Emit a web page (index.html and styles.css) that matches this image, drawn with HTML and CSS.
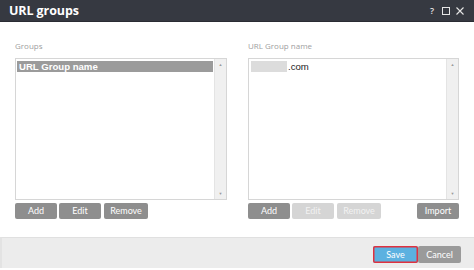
FILE: index.html
```html
<!DOCTYPE html>
<html>
<head>
<meta charset="utf-8">
<link rel="stylesheet" href="styles.css">
</head>
<body>
<div class="dialog">
  <div class="titlebar">
    <span class="title">URL groups</span>
    <div class="win-icons">
      <span class="ic-help">?</span>
      <svg class="ic" width="8" height="8" viewBox="0 0 8 8"><rect x="0.5" y="0.5" width="7" height="7" fill="none" stroke="#e6e6e6" stroke-width="1"/></svg>
      <svg class="ic" width="8" height="8" viewBox="0 0 8 8"><path d="M0.5 0.5L7.5 7.5M7.5 0.5L0.5 7.5" stroke="#e6e6e6" stroke-width="1.1"/></svg>
    </div>
  </div>
  <div class="content">
    <div class="col">
      <div class="label">Groups</div>
      <div class="listbox">
        <div class="items">
          <div class="item selected">URL Group name</div>
        </div>
        <div class="scrollbar"><span class="arr">&#9650;</span><span class="arr">&#9660;</span></div>
      </div>
      <div class="btnrow">
        <button class="btn">Add</button>
        <button class="btn">Edit</button>
        <button class="btn">Remove</button>
      </div>
    </div>
    <div class="col">
      <div class="label">URL Group name</div>
      <div class="listbox">
        <div class="items">
          <div class="item"><span class="blur"></span>.com</div>
        </div>
        <div class="scrollbar"><span class="arr">&#9650;</span><span class="arr">&#9660;</span></div>
      </div>
      <div class="btnrow">
        <button class="btn">Add</button>
        <button class="btn disabled">Edit</button>
        <button class="btn disabled">Remove</button>
        <span class="spacer"></span>
        <button class="btn">Import</button>
      </div>
    </div>
  </div>
  <div class="footer">
    <button class="btn save">Save</button>
    <button class="btn cancel">Cancel</button>
  </div>
</div>
</body>
</html>
```
FILE: styles.css
```css
html, body {
  margin: 0;
  padding: 0;
  background: #fff;
}
.dialog {
  width: 474px;
  height: 270px;
  display: flex;
  flex-direction: column;
  font-family: "Open Sans", "Liberation Sans", sans-serif;
}
.titlebar {
  height: 22px;
  background: #363941;
  border-bottom: 1px solid #2a2c33;
  box-sizing: border-box;
  display: flex;
  align-items: center;
  justify-content: space-between;
  padding: 0 10px 0 9px;
}
.title {
  color: #fff;
  font-weight: 700;
  font-size: 12.5px;
  letter-spacing: -0.1px;
}
.win-icons {
  display: flex;
  align-items: center;
  gap: 6px;
}
.ic-help {
  color: #e6e6e6;
  font-size: 9px;
  font-weight: 600;
  margin-right: 2px;
}
.content {
  flex: 1;
  display: grid;
  grid-template-columns: 212px 211px;
  column-gap: 21px;
  padding: 18px 0 0 15px;
}
.col {
  display: flex;
  flex-direction: column;
}
.label {
  height: 12px;
  line-height: 12px;
  font-size: 8px;
  color: #a0a0a0;
  margin-bottom: 6px;
}
.listbox {
  height: 142px;
  box-sizing: border-box;
  border: 1px solid #d6d6d6;
  display: flex;
}
.items {
  flex: 1;
  padding: 2px 1px 0 1px;
}
.item {
  height: 11px;
  line-height: 11px;
  font-family: "Liberation Sans", Arial, sans-serif;
  font-size: 9.6px;
  color: #222;
  display: flex;
  align-items: center;
}
.item.selected {
  background: #9b9b9b;
  color: #fff;
  font-weight: 700;
  padding-left: 2px;
}
.blur {
  display: inline-block;
  width: 36px;
  height: 11px;
  background: #dcdcdc;
  margin: 0 1px 0 1px;
}
.scrollbar {
  width: 11px;
  background: #f0f0f0;
  border-left: 1px solid #e4e4e4;
  display: flex;
  flex-direction: column;
  justify-content: space-between;
  align-items: center;
  padding: 3px 0 3px;
}
.arr {
  font-size: 4px;
  color: #9a9a9a;
  line-height: 5px;
}
.btnrow {
  display: flex;
  gap: 2px;
  margin-top: 3px;
}
.spacer {
  flex: 1;
}
.btn {
  height: 16px;
  width: 42px;
  padding: 0;
  border: none;
  border-radius: 2px;
  background: #8e8e8e;
  color: #fff;
  font-family: Lato, "Open Sans", sans-serif;
  font-size: 9px;
  line-height: 16px;
}
.btnrow .btn:nth-child(3) {
  width: 44px;
  margin-left: 1px;
}
.btn.disabled {
  background: #d5d5d5;
  color: #f2f2f2;
}
.footer {
  margin-top: 15px;
  height: 31px;
  box-sizing: border-box;
  background: #ececec;
  border-top: 1px solid #e0e0e0;
  border-left: 2px solid #e3e3e3;
  display: flex;
  justify-content: flex-end;
  align-items: flex-start;
  padding: 8px 13px 0 0;
  margin-bottom: 2px;
}
.footer .btn {
  height: 17px;
}
.save {
  width: 45px;
  background: #5bb1e0;
  box-shadow: 0 0 0 1.5px #e0313f inset;
  border: none;
}
.cancel {
  width: 43px;
  background: #9a9a9a;
}
```
